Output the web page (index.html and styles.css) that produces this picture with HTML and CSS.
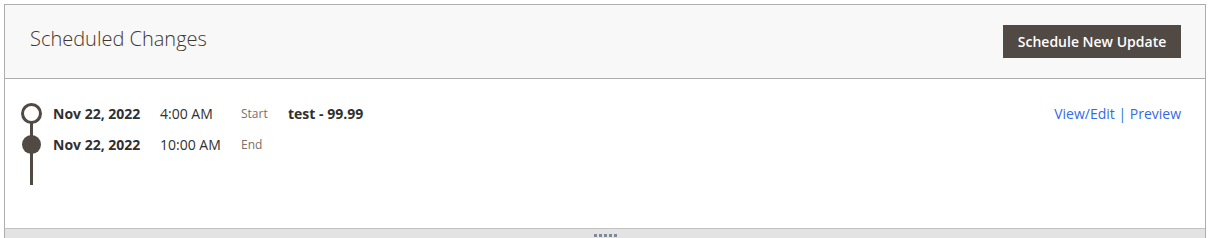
FILE: index.html
```html
<!DOCTYPE html>
<html lang="en">
<head>
  <meta charset="UTF-8">
  <title>Scheduled Changes</title>
  <link rel="stylesheet" href="styles.css">
</head>
<body>
<div class="block-schedule">
  <div class="block-title">
    <h2>Scheduled Changes</h2>
    <button class="action-primary">Schedule New Update</button>
  </div>
  <div class="block-content">
    <div class="timeline">
      <div class="timeline-row">
        <span class="marker marker-start"></span>
        <span class="date">Nov 22, 2022</span>
        <span class="time">4:00 AM</span>
        <span class="label">Start</span>
        <span class="name">test - 99.99</span>
        <span class="actions">
          <a href="#">View/Edit</a> <span class="sep">|</span> <a href="#">Preview</a>
        </span>
      </div>
      <div class="timeline-row">
        <span class="marker marker-end"></span>
        <span class="date">Nov 22, 2022</span>
        <span class="time">10:00 AM</span>
        <span class="label">End</span>
      </div>
    </div>
  </div>
  <div class="resize-bar">
    <span class="dots"><i></i><i></i><i></i><i></i><i></i></span>
  </div>
</div>
</body>
</html>
```

FILE: styles.css
```css
body {
  margin: 4px;
  font-family: "Open Sans", Arial, sans-serif;
  color: #303030;
  background: #ffffff;
}

.block-schedule {
  border: 1px solid #adadad;
  border-bottom: none;
}

.block-title {
  background: #f8f8f8;
  border-bottom: 1px solid #adadad;
  height: 73px;
  display: flex;
  align-items: center;
  justify-content: space-between;
  padding: 0 24px 0 25px;
}

.block-title h2 {
  margin: 0;
  font-size: 20px;
  font-weight: 300;
  color: #41362f;
  position: relative;
  top: -3px;
}

.action-primary {
  background: #514943;
  color: #ffffff;
  border: none;
  font-family: "Open Sans", Arial, sans-serif;
  font-size: 14px;
  font-weight: 600;
  width: 178px;
  height: 33px;
  padding: 0;
  cursor: pointer;
}

.block-content {
  height: 149px;
  padding: 19px 24px 0 16px;
  box-sizing: border-box;
}

.timeline {
  position: relative;
}

/* вертикальная линия */
.timeline::before {
  content: "";
  position: absolute;
  left: 9px;
  top: 15px;
  width: 3px;
  height: 72px;
  background: #514943;
}

.timeline-row {
  display: flex;
  align-items: center;
  height: 31px;
  font-size: 14px;
}

.marker {
  position: relative;
  width: 21px;
  height: 21px;
  border-radius: 50%;
  box-sizing: border-box;
  margin-right: 11px;
  flex-shrink: 0;
}

.marker-start {
  border: 3px solid #514943;
  background: #ffffff;
}

.marker-end {
  width: 19px;
  height: 19px;
  margin-left: 1px;
  margin-right: 12px;
  background: #514943;
}

.date {
  font-weight: 700;
  width: 107px;
}

.time {
  width: 81px;
}

.label {
  font-size: 12px;
  color: #7a6f69;
  width: 47px;
}

.name {
  font-weight: 700;
}

.actions {
  margin-left: auto;
  color: #1979c3;
}

.actions a {
  color: #3669e8;
  text-decoration: none;
}

.actions .sep {
  color: #1979c3;
}

.resize-bar {
  border-top: 1px solid #c2c2c2;
  background: #e3e3e3;
  height: 12px;
  display: flex;
  justify-content: center;
  padding-top: 5px;
  box-sizing: border-box;
}

.dots {
  display: flex;
  gap: 2px;
}

.dots i {
  width: 3px;
  height: 3px;
  background: #7d8a9a;
}
```
